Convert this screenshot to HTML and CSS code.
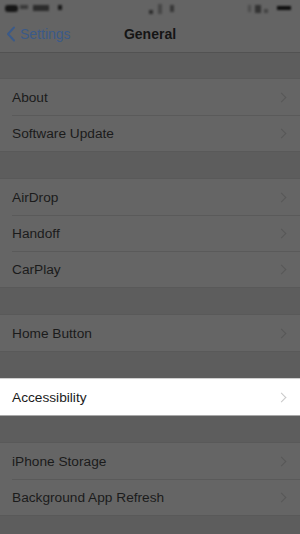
FILE: index.html
```html
<!DOCTYPE html>
<html>
<head>
<meta charset="utf-8">
<link rel="stylesheet" href="styles.css">
</head>
<body>
<div class="screen">
  <div class="status">
    <div class="blobs left">
      <span class="b b1"></span><span class="b b2"></span><span class="b b3"></span><span class="b b4"></span>
    </div>
    <div class="blobs mid">
      <span class="b m1"></span><span class="b m2"></span><span class="b m3"></span>
    </div>
    <div class="blobs right">
      <span class="b r1"></span><span class="b r2"></span><span class="b r3"></span><span class="b r4"></span>
    </div>
  </div>
  <div class="nav">
    <div class="back">
      <svg class="back-chev" width="10" height="16" viewBox="0 0 10 16"><path d="M8 1.5 L2 8 L8 14.5" fill="none" stroke="#3b5a88" stroke-width="2" stroke-linecap="round" stroke-linejoin="round"/></svg>
      <span>Settings</span>
    </div>
    <div class="title">General</div>
  </div>

  <div class="gap g1"></div>
  <div class="group">
    <div class="row"><span>About</span><i class="chev"></i></div>
    <div class="row"><span>Software Update</span><i class="chev"></i></div>
  </div>
  <div class="gap g2"></div>
  <div class="group">
    <div class="row"><span>AirDrop</span><i class="chev"></i></div>
    <div class="row"><span>Handoff</span><i class="chev"></i></div>
    <div class="row"><span>CarPlay</span><i class="chev"></i></div>
  </div>
  <div class="gap g3"></div>
  <div class="group">
    <div class="row"><span>Home Button</span><i class="chev"></i></div>
  </div>
  <div class="gap g4"></div>
  <div class="group lit">
    <div class="row"><span>Accessibility</span><i class="chev"></i></div>
  </div>
  <div class="gap g5"></div>
  <div class="group">
    <div class="row"><span>iPhone Storage</span><i class="chev"></i></div>
    <div class="row"><span>Background App Refresh</span><i class="chev"></i></div>
  </div>
</div>
</body>
</html>
```

FILE: styles.css
```css
* { box-sizing: border-box; }
html, body { margin: 0; padding: 0; }
body {
  width: 300px;
  height: 534px;
  overflow: hidden;
  background: #5d5d5d;
  font-family: "Liberation Sans", Arial, sans-serif;
}
.screen {
  width: 300px;
  height: 534px;
  background: #5d5d5d;
  display: flex;
  flex-direction: column;
}
.status {
  height: 20px;
  display: flex;
  justify-content: space-between;
  align-items: flex-start;
  padding: 5px 9px 0 5px;
  background: #646464;
}
.blobs { display: flex; align-items: flex-start; filter: blur(1.3px); }
.b { display: block; background: #1e1e1e; }
.b1 { width: 13px; height: 7px; border-radius: 3px; background: #161616; }
.b2 { width: 8px; height: 4px; background: #3a3a3a; margin-left: 2px; }
.b3 { width: 16px; height: 6px; background: #2c2c2c; margin-left: 5px; }
.b4 { width: 4px; height: 5px; background: #1a1a1a; margin-left: 9px; }
.mid { margin-left: 22px; margin-right: 10px; }
.m1 { width: 4px; height: 4px; margin-top: 5px; background: #2e2e2e; }
.m2 { width: 4px; height: 10px; background: #474747; margin-left: 5px; margin-top: -1px; }
.m3 { width: 4px; height: 7px; background: #383838; margin-left: 8px; }
.r1 { width: 3px; height: 7px; background: #4c4c4c; }
.r2 { width: 6px; height: 8px; background: #333; margin-left: 4px; }
.r3 { width: 4px; height: 4px; background: #444; margin-top: 4px; margin-left: 3px; }
.r4 { width: 14px; height: 4px; background: #0e0e0e; margin-left: 9px; margin-top: 1px; }

.nav {
  height: 33px;
  position: relative;
  display: flex;
  align-items: center;
  padding-bottom: 4px;
  background: #646464;
  border-bottom: 1px solid #525252;
}
.back {
  display: flex;
  align-items: center;
  gap: 4px;
  padding-left: 6px;
  color: #3b5a88;
  font-size: 14px;
}
.back-chev { display: block; }
.title {
  position: absolute;
  left: 0;
  right: 0;
  top: 0;
  bottom: 5px;
  display: flex;
  align-items: center;
  justify-content: center;
  font-size: 14px;
  font-weight: bold;
  color: #151515;
}
.gap { flex: none; }
.g1 { height: 25px; }
.g2 { height: 26px; }
.g3 { height: 26px; }
.g4 { height: 26px; }
.g5 { height: 26px; }

.group {
  background: #656565;
  border-top: 1px solid #595959;
  border-bottom: 1px solid #595959;
}
.row {
  height: 36px;
  display: flex;
  align-items: center;
  justify-content: space-between;
  margin-left: 12px;
  padding-right: 12px;
  font-size: 13.7px;
  color: #1b1b1b;
  border-top: 1px solid #5a5a5a;
}
.row:first-child { border-top: none; }
.chev {
  width: 7px;
  height: 7px;
  border-top: 1.3px solid #575757;
  border-right: 1.3px solid #575757;
  transform: rotate(45deg);
  margin-right: 3px;
}
.lit {
  background: #ffffff;
  border-top: 1px solid #cfcfcf;
  border-bottom: 1px solid #a8a8a8;
}
.lit .row { color: #1a1a1a; }
.lit .chev { border-color: #c8c8c8; }
```
